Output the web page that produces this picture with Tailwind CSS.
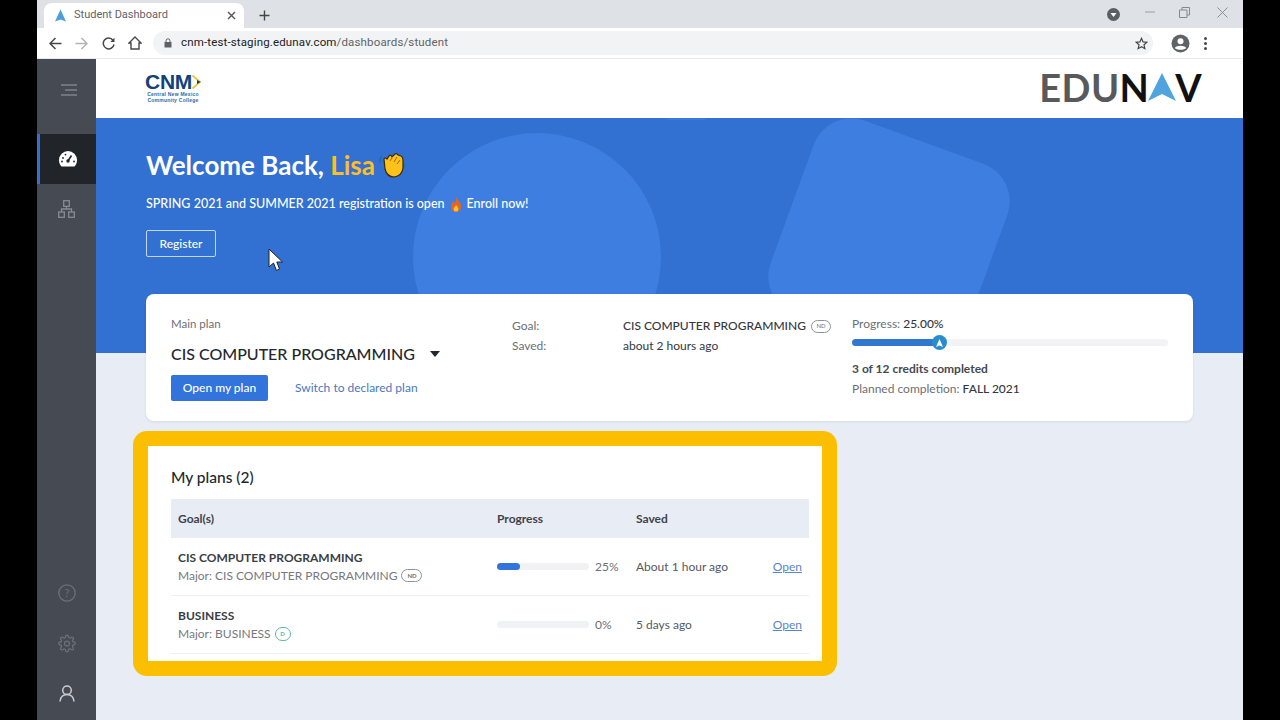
<!DOCTYPE html>
<html lang="en">
<head>
<meta charset="UTF-8">
<script src="https://cdn.jsdelivr.net/npm/@tailwindcss/browser@4"></script>
<title>Student Dashboard</title>
</head>
<body class="bg-black overflow-hidden font-['Lato','Liberation_Sans',sans-serif]">
<div class="mx-[37px] w-[1206px] h-[720px] flex flex-col overflow-hidden relative">

  <!-- browser tabs -->
  <div class="h-[28px] bg-[#dee1e6] flex items-end relative shrink-0">
    <div class="ml-[7px] w-[200px] h-[25px] bg-white rounded-t-lg flex items-center pl-[10px] pr-[8px]">
      <svg width="13" height="13" viewBox="0 0 13 13"><path d="M6.5 0.5 L12 12.5 L6.5 10.5 L1 12.5 Z" fill="#4a9fdc"/></svg>
      <span class="ml-[7px] text-[11px] text-[#5f6368] font-['Roboto',sans-serif]">Student Dashboard</span>
      <svg class="ml-auto" width="9" height="9" viewBox="0 0 9 9"><path d="M1 1 L8 8 M8 1 L1 8" stroke="#555" stroke-width="1.4"/></svg>
    </div>
    <svg class="ml-[15px] mb-[7px]" width="11" height="11" viewBox="0 0 11 11"><path d="M5.5 0.5 V10.5 M0.5 5.5 H10.5" stroke="#444" stroke-width="1.4"/></svg>
    <div class="ml-auto flex items-center h-[28px] pb-0">
      <svg width="13" height="13" viewBox="0 0 13 13"><circle cx="6.5" cy="6.5" r="6.5" fill="#5b5f64"/><path d="M3.5 5 H9.5 L6.5 9 Z" fill="#fff"/></svg>
      <svg class="ml-[25px] mb-[4px]" width="10" height="2" viewBox="0 0 10 2"><path d="M0 1 H10" stroke="#9a9ea3"/></svg>
      <svg class="ml-[24px] mb-[4px]" width="11" height="11" viewBox="0 0 11 11"><path d="M0.5 3 H8 V10.5 H0.5 Z M3 3 V0.5 H10.5 V8 H8" fill="none" stroke="#85898e"/></svg>
      <svg class="ml-[27px] mb-[4px] mr-[15px]" width="11" height="11" viewBox="0 0 11 11"><path d="M0.5 0.5 L10.5 10.5 M10.5 0.5 L0.5 10.5" stroke="#8b8f94"/></svg>
    </div>
  </div>

  <!-- browser toolbar -->
  <div class="h-[31px] bg-white border-b border-[#e8e9ea] flex items-center shrink-0">
    <svg class="ml-[12px]" width="13" height="13" viewBox="0 0 13 13"><path d="M12.5 6.5 H1.5 M6.5 1 L1 6.5 L6.5 12" fill="none" stroke="#474747" stroke-width="1.5"/></svg>
    <svg class="ml-[13px]" width="13" height="13" viewBox="0 0 13 13"><path d="M0.5 6.5 H11.5 M6.5 1 L12 6.5 L6.5 12" fill="none" stroke="#b4b4b4" stroke-width="1.5"/></svg>
    <svg class="ml-[14px]" width="13" height="13" viewBox="0 0 13 13"><path d="M11 3.2 A5.4 5.4 0 1 0 12 7.5" fill="none" stroke="#474747" stroke-width="1.5"/><path d="M12.5 0.8 V5 H8.3 Z" fill="#474747"/></svg>
    <svg class="ml-[13px]" width="14" height="14" viewBox="0 0 14 14"><path d="M7 1 L13 7 H11 V13 H3 V7 H1 Z" fill="none" stroke="#474747" stroke-width="1.4"/></svg>
    <div class="ml-[11px] w-[1000px] h-[24px] bg-[#f1f3f4] rounded-full flex items-center pl-[11px] shrink-0">
      <svg width="8" height="10" viewBox="0 0 8 10"><path d="M0.5 4 H7.5 V9.5 H0.5 Z" fill="#5f6368"/><path d="M2 4 V2.8 A2 2 0 0 1 6 2.8 V4" fill="none" stroke="#5f6368"/></svg>
      <span class="ml-[9px] text-[11.5px] tracking-[0.15px] font-['Roboto',sans-serif] text-[#202124]">cnm-test-staging.edunav.com<span class="text-[#5f6368]">/dashboards/student</span></span>
      <svg class="ml-auto mr-[5px]" width="13" height="13" viewBox="0 0 24 24"><path d="M12 2.5 L14.9 9 L22 9.7 L16.6 14.4 L18.2 21.5 L12 17.8 L5.8 21.5 L7.4 14.4 L2 9.7 L9.1 9 Z" fill="none" stroke="#444" stroke-width="2.2"/></svg>
    </div>
    <svg class="ml-[18px]" width="19" height="19" viewBox="0 0 19 19"><circle cx="9.5" cy="9.5" r="9" fill="#5f6368"/><circle cx="9.5" cy="7.3" r="3" fill="#fff"/><path d="M3.8 14 C5.5 11 13.5 11 15.2 14 C13.5 16.4 5.5 16.4 3.8 14 Z" fill="#fff"/></svg>
    <div class="ml-[14px] flex flex-col gap-[2px]">
      <div class="w-[3px] h-[3px] rounded-full bg-[#474747]"></div>
      <div class="w-[3px] h-[3px] rounded-full bg-[#474747]"></div>
      <div class="w-[3px] h-[3px] rounded-full bg-[#474747]"></div>
    </div>
  </div>

  <div class="flex flex-1 min-h-0">
    <!-- sidebar -->
    <aside class="w-[59px] bg-[#464a53] flex flex-col shrink-0">
      <div class="h-[62px] flex items-center justify-center pl-[5px]">
        <svg width="18" height="12" viewBox="0 0 18 12"><path d="M1 1 H17 M5 6 H17 M1 11 H17" stroke="#7f838b" stroke-width="1.3"/></svg>
      </div>
      <div class="mt-[13px] h-[50px] bg-[#212529] border-l-[3px] border-[#3570ce] flex items-center justify-center">
        <svg width="18" height="16" viewBox="0 0 18 16"><path d="M9 0 A9 9 0 0 1 18 9 C18 12 17 14 15.5 15.5 H2.5 C1 14 0 12 0 9 A9 9 0 0 1 9 0 Z" fill="#fff"/><path d="M9 10 L12.5 4.5" stroke="#212529" stroke-width="1.6"/><circle cx="9" cy="10" r="1.7" fill="#212529"/><circle cx="4" cy="7" r="0.9" fill="#212529"/><circle cx="6.5" cy="3.6" r="0.9" fill="#212529"/><circle cx="3" cy="10.5" r="0.9" fill="#212529"/><circle cx="15" cy="10.5" r="0.9" fill="#212529"/></svg>
      </div>
      <div class="h-[50px] flex items-center justify-center">
        <svg width="17" height="18" viewBox="0 0 17 18" fill="none" stroke="#888c93" stroke-width="1.3"><rect x="5.7" y="0.7" width="5.6" height="5.6"/><rect x="0.7" y="12" width="5.6" height="5.3"/><rect x="10.7" y="12" width="5.6" height="5.3"/><path d="M8.5 6.3 V9 M3.5 12 V9 H13.5 V12"/></svg>
      </div>
      <div class="mt-auto flex flex-col items-center pb-[2px]">
        <div class="h-[50px] flex items-center justify-center">
          <svg width="18" height="18" viewBox="0 0 18 18" fill="none"><circle cx="9" cy="9" r="8.2" stroke="#6c7078" stroke-width="1.3"/><text x="9" y="13" text-anchor="middle" font-size="11" fill="#6c7078" font-family="Lato">?</text></svg>
        </div>
        <div class="h-[50px] flex items-center justify-center">
          <svg width="18" height="19" viewBox="0 0 24 24" fill="none" stroke="#6c7078" stroke-width="1.7"><circle cx="12" cy="12" r="3.3"/><path d="M19.4 15a1.7 1.7 0 0 0 .3 1.8l.1.1a2 2 0 1 1-2.8 2.8l-.1-.1a1.7 1.7 0 0 0-2.9 1.2V21a2 2 0 1 1-4 0v-.1a1.7 1.7 0 0 0-2.9-1.2l-.1.1a2 2 0 1 1-2.8-2.8l.1-.1a1.7 1.7 0 0 0-1.2-2.9H3a2 2 0 1 1 0-4h.1a1.7 1.7 0 0 0 1.2-2.9l-.1-.1a2 2 0 1 1 2.8-2.8l.1.1a1.7 1.7 0 0 0 1.9.3H9a1.7 1.7 0 0 0 1-1.5V3a2 2 0 1 1 4 0v.1a1.7 1.7 0 0 0 2.9 1.2l.1-.1a2 2 0 1 1 2.8 2.8l-.1.1a1.7 1.7 0 0 0-.3 1.9V9a1.7 1.7 0 0 0 1.5 1H21a2 2 0 1 1 0 4h-.1a1.7 1.7 0 0 0-1.5 1z"/></svg>
        </div>
        <div class="h-[50px] flex items-center justify-center">
          <svg width="16" height="17" viewBox="0 0 16 17" fill="none" stroke="#c9ccd1" stroke-width="1.5"><circle cx="8" cy="5.2" r="4.3"/><path d="M1 16.5 C1.5 12 4.5 9.6 8 9.6 C11.5 9.6 14.5 12 15 16.5"/></svg>
        </div>
      </div>
    </aside>

    <!-- page -->
    <main class="flex-1 bg-[#e8ecf4] relative min-w-0 overflow-hidden">
      <header class="h-[59px] bg-white flex items-center justify-between pl-[43px] pr-[41px]">
        <div class="mt-[-3px] flex flex-col items-center w-[68px]">
          <div class="flex items-center leading-none">
            <span class="text-[21px] font-black text-[#12427a] tracking-[-0.3px] font-['Liberation_Sans',sans-serif]">CNM</span>
            <svg width="9" height="14" viewBox="0 0 9 14"><path d="M0.5 0.5 L8 7 L0.5 13.5" fill="none" stroke="#e7c536" stroke-width="1.8"/><path d="M5 5 L8.8 7 L5 9 Z" fill="#12427a"/></svg>
          </div>
          <span class="text-[5px] font-bold text-[#2d6aa5] leading-[5.5px] text-center tracking-[0.25px] font-['Liberation_Sans',sans-serif]">Central New Mexico<br>Community College</span>
        </div>
        <div class="flex items-center text-[38px] font-bold leading-none font-['Lato',sans-serif] tracking-[0.4px] mt-[-3px]">
          <span class="text-[#58595b]">EDU</span><span class="text-[#111]">N</span>
          <svg width="30" height="28" viewBox="0 0 30 28" class="mx-[-2px]"><path d="M15 0 L29 28 L15 21 L1 28 Z" fill="#4fa3de"/></svg>
          <span class="text-[#111]">V</span>
        </div>
      </header>

      <!-- blue banner -->
      <section class="h-[235px] bg-[#3270d2] relative overflow-hidden pl-[50px] pt-[29px]">
        <div class="absolute left-[317px] top-[15px] w-[248px] h-[248px] rounded-full bg-[#3e7ee0]"></div>
        <div class="absolute left-[690px] top-[18px] w-[206px] h-[206px] rounded-[40px] bg-[#3e7ee0] rotate-[20deg]"></div>
        <div class="absolute left-[565px] top-[-20px] w-[50px] h-[22px] rounded-[10px] bg-[#3a79da]"></div>
        <div class="relative">
          <h1 class="flex items-center text-[26px] leading-[36px] font-bold text-white">Welcome Back,&nbsp;<span class="text-[#fbbf2e]">Lisa</span>
            <svg class="ml-[3px]" width="28" height="28" viewBox="0 0 28 28"><path d="M4 5 Q1 8 2 12 M23 19 Q26 17 26 13" fill="none" stroke="#1f6f9f" stroke-width="1.6"/><path d="M7 18 L6 8 Q7 6 9 8 L11 5 Q13 3 14 6 L17 3 Q19 2 20 4 L23 5 Q25 6 25 9 L25 17 Q24 25 16 26 Q9 26 7 18 Z" fill="#fcc21b" stroke="#3a2a08" stroke-width="1.2"/><path d="M12 10 L14 7 M16 11 L19 6 M19 13 L22 9" stroke="#9a6a10" stroke-width="1"/></svg>
          </h1>
          <p class="mt-[13px] flex items-center text-[12.5px] leading-[16px] font-medium text-white">SPRING 2021 and SUMMER 2021 registration is open
            <svg class="ml-[5px] mr-[5px]" width="12" height="15" viewBox="0 0 12 15"><path d="M6 0 C7 3 11 5 11 9.5 C11 12.8 8.8 15 6 15 C3.2 15 1 12.8 1 9.5 C1 7 2.5 6 3 4 C4 5 4.5 5.5 4.7 6.3 C5.5 4.5 6.2 2.5 6 0 Z" fill="#e8641e"/><path d="M6 8 C7 9.5 8.4 10.5 8.4 12 C8.4 13.6 7.3 14.6 6 14.6 C4.7 14.6 3.6 13.6 3.6 12 C3.6 10.5 5.4 9.8 6 8 Z" fill="#fbc02d"/></svg>
            Enroll now!</p>
          <button class="mt-[18px] block w-[70px] h-[27px] border border-[#c5d6f2] rounded-[2px] text-[12px] font-medium text-white">Register</button>
        </div>
      </section>

      <!-- main plan card -->
      <section class="relative mt-[-59px] mx-[50px] h-[127px] bg-white rounded-[8px] shadow-[0_1px_3px_rgba(0,0,0,0.08)] flex pl-[25px] pt-[22px]">
        <div class="w-[341px] shrink-0">
          <p class="text-[11.5px] leading-[16px] text-[#6b6f76]">Main plan</p>
          <div class="mt-[12px] flex items-center">
            <span class="text-[16px] leading-[20px] text-[#23272c] font-medium">CIS COMPUTER PROGRAMMING</span>
            <div class="ml-[15px] w-0 h-0 border-x-[5px] border-x-transparent border-t-[6px] border-t-[#23272c]"></div>
          </div>
          <div class="mt-[11px] flex items-center">
            <button class="w-[97px] h-[26px] bg-[#3273dc] rounded-[2px] text-[12px] font-medium text-white">Open my plan</button>
            <a class="ml-[27px] text-[12px] text-[#4a78bd]">Switch to declared plan</a>
          </div>
        </div>
        <div class="w-[340px] shrink-0 text-[12px] leading-[20px] text-[#34383e]">
          <div class="flex items-center"><span class="w-[111px] text-[#6b6f76]">Goal:</span><span class="font-medium">CIS COMPUTER PROGRAMMING</span>
            <span class="ml-[5px] w-[20px] h-[13px] rounded-full border border-[#8f9398] flex items-center justify-center text-[6px] leading-none text-[#6b6f76]">ND</span></div>
          <div class="flex"><span class="w-[111px] text-[#6b6f76]">Saved:</span><span>about 2 hours ago</span></div>
        </div>
        <div class="w-[316px] shrink-0 text-[12px] text-[#34383e]">
          <p class="leading-[16px]"><span class="text-[#6b6f76]">Progress:</span> <span class="font-medium">25.00%</span></p>
          <div class="relative mt-[7px] h-[7px] rounded-full bg-[#f2f3f4]">
            <div class="h-[7px] w-[88px] rounded-full bg-[#2f77cf]"></div>
            <div class="absolute left-[80px] top-[-4px] w-[15px] h-[15px] rounded-full bg-[#2b8ccb] flex items-center justify-center">
              <svg width="7" height="8" viewBox="0 0 7 8"><path d="M3.5 0 L7 8 L3.5 6.5 L0 8 Z" fill="#fff"/></svg>
            </div>
          </div>
          <p class="mt-[13px] leading-[20px] font-bold text-[#45494f]">3 of 12 credits completed</p>
          <p class="leading-[19px]"><span class="text-[#6b6f76]">Planned completion:</span> <span class="font-medium">FALL 2021</span></p>
        </div>
      </section>

      <!-- my plans, yellow highlight -->
      <section class="ml-[37px] mt-[10px] w-[704px] h-[245px] bg-[#fbbf00] rounded-[14px] p-[15px]">
        <div class="bg-white h-full pl-[23px] pr-[13px] pt-[20px]">
          <h2 class="text-[15.5px] leading-[22px] font-medium text-[#23272c]">My plans (2)</h2>
          <div class="mt-[11px] h-[39px] bg-[#e8ecf4] flex items-center text-[12px] font-bold text-[#3f4348] pl-[7px]">
            <span class="w-[319px]">Goal(s)</span><span class="w-[139px]">Progress</span><span>Saved</span>
          </div>
          <div class="h-[58px] border-b border-[#eeeff1] flex items-center pl-[7px] pr-[7px] text-[12px]">
            <div class="w-[319px] leading-[18px]">
              <p class="font-bold text-[#3a3e44]">CIS COMPUTER PROGRAMMING</p>
              <p class="flex items-center text-[#75797f]">Major: CIS COMPUTER PROGRAMMING
                <span class="ml-[4px] w-[21px] h-[13px] rounded-full border border-[#8f9398] flex items-center justify-center text-[6px] leading-none font-bold text-[#6b6f76]">ND</span></p>
            </div>
            <div class="w-[139px] flex items-center">
              <div class="w-[92px] h-[7px] rounded-full bg-[#f1f2f3]"><div class="w-[23px] h-[7px] rounded-full bg-[#3273dc]"></div></div>
              <span class="ml-[6px] text-[#6b6f76]">25%</span>
            </div>
            <span class="text-[#55595f]">About 1 hour ago</span>
            <a class="ml-auto text-[#5a86c5] underline">Open</a>
          </div>
          <div class="h-[58px] border-b border-[#eeeff1] flex items-center pl-[7px] pr-[7px] text-[12px]">
            <div class="w-[319px] leading-[18px]">
              <p class="font-bold text-[#3a3e44]">BUSINESS</p>
              <p class="flex items-center text-[#75797f]">Major: BUSINESS
                <span class="ml-[4px] w-[16px] h-[14px] rounded-full border border-[#5fb8a3] flex items-center justify-center text-[6px] leading-none font-bold text-[#5fb8a3]">D</span></p>
            </div>
            <div class="w-[139px] flex items-center">
              <div class="w-[92px] h-[7px] rounded-full bg-[#f1f2f3]"></div>
              <span class="ml-[6px] text-[#6b6f76]">0%</span>
            </div>
            <span class="text-[#55595f]">5 days ago</span>
            <a class="ml-auto text-[#5a86c5] underline">Open</a>
          </div>
        </div>
      </section>
    </main>
  </div>

  <!-- mouse pointer over the page -->
  <svg class="absolute left-[231px] top-[248px]" width="16" height="24" viewBox="0 0 16 24"><path d="M1 1 L1 19 L5.5 15 L8.5 22.5 L11.5 21 L8.8 14 L14.5 14 Z" fill="#fff" stroke="#222" stroke-width="1"/></svg>
</div>
</body>
</html>
